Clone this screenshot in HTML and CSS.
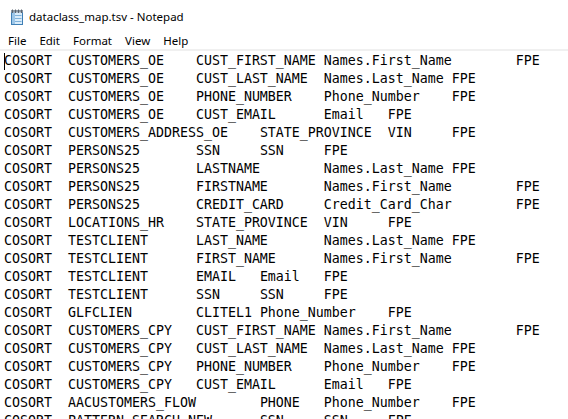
FILE: index.html
```html
<!DOCTYPE html>
<html>
<head>
<meta charset="utf-8">
<title>dataclass_map.tsv - Notepad</title>
<link rel="stylesheet" href="styles.css">
</head>
<body>
<div class="window">
  <div class="titlebar">
    <svg class="app-icon" width="16" height="16" viewBox="0 0 16 16">
      <rect x="2.5" y="2.5" width="11" height="13" fill="#d9ecfa" stroke="#3f7fb5"/>
      <rect x="3" y="3" width="3" height="12" fill="#9cc6e8"/>
      <line x1="6" y1="6.5" x2="12.5" y2="6.5" stroke="#7fb1da"/>
      <line x1="6" y1="9.5" x2="12.5" y2="9.5" stroke="#7fb1da"/>
      <line x1="6" y1="12.5" x2="12.5" y2="12.5" stroke="#7fb1da"/>
      <rect x="2" y="1" width="12" height="2.5" fill="#8d9aa6"/>
      <line x1="3.5" y1="0.5" x2="3.5" y2="4" stroke="#5a6470"/>
      <line x1="6.5" y1="0.5" x2="6.5" y2="4" stroke="#5a6470"/>
      <line x1="9.5" y1="0.5" x2="9.5" y2="4" stroke="#5a6470"/>
      <line x1="12.5" y1="0.5" x2="12.5" y2="4" stroke="#5a6470"/>
    </svg>
    <span class="title">dataclass_map.tsv - Notepad</span>
  </div>
  <div class="menubar">
    <span class="menu-item">File</span>
    <span class="menu-item">Edit</span>
    <span class="menu-item">Format</span>
    <span class="menu-item">View</span>
    <span class="menu-item">Help</span>
  </div>
  <div class="editor"><span class="caret"></span><pre class="content">COSORT	CUSTOMERS_OE	CUST_FIRST_NAME	Names.First_Name	FPE
COSORT	CUSTOMERS_OE	CUST_LAST_NAME	Names.Last_Name	FPE
COSORT	CUSTOMERS_OE	PHONE_NUMBER	Phone_Number	FPE
COSORT	CUSTOMERS_OE	CUST_EMAIL	Email	FPE
COSORT	CUSTOMERS_ADDRESS_OE	STATE_PROVINCE	VIN	FPE
COSORT	PERSONS25	SSN	SSN	FPE
COSORT	PERSONS25	LASTNAME	Names.Last_Name	FPE
COSORT	PERSONS25	FIRSTNAME	Names.First_Name	FPE
COSORT	PERSONS25	CREDIT_CARD	Credit_Card_Char	FPE
COSORT	LOCATIONS_HR	STATE_PROVINCE	VIN	FPE
COSORT	TESTCLIENT	LAST_NAME	Names.Last_Name	FPE
COSORT	TESTCLIENT	FIRST_NAME	Names.First_Name	FPE
COSORT	TESTCLIENT	EMAIL	Email	FPE
COSORT	TESTCLIENT	SSN	SSN	FPE
COSORT	GLFCLIEN	CLITEL1	Phone_Number	FPE
COSORT	CUSTOMERS_CPY	CUST_FIRST_NAME	Names.First_Name	FPE
COSORT	CUSTOMERS_CPY	CUST_LAST_NAME	Names.Last_Name	FPE
COSORT	CUSTOMERS_CPY	PHONE_NUMBER	Phone_Number	FPE
COSORT	CUSTOMERS_CPY	CUST_EMAIL	Email	FPE
COSORT	AACUSTOMERS_FLOW	PHONE	Phone_Number	FPE
COSORT	PATTERN_SEARCH_NEW	SSN	SSN	FPE</pre></div>
</div>
</body>
</html>
```

FILE: styles.css
```css
html, body {
  margin: 0;
  padding: 0;
  background: #ffffff;
  overflow: hidden;
}

.window {
  width: 568px;
  height: 419px;
  display: flex;
  flex-direction: column;
  background: #ffffff;
  overflow: hidden;
}

.titlebar {
  flex: none;
  height: 31px;
  display: flex;
  align-items: center;
  padding-left: 9px;
  gap: 4px;
  box-sizing: border-box;
  padding-top: 2px;
}

.app-icon {
  flex: none;
}

.title {
  font-family: "Noto Sans", "Open Sans", sans-serif;
  font-size: 11.5px;
  color: #000000;
}

.menubar {
  flex: none;
  height: 18px;
  display: flex;
  align-items: center;
  padding-left: 1.5px;
  font-family: "Noto Sans", "Open Sans", sans-serif;
  font-size: 11.5px;
  color: #000000;
  border-bottom: 2px solid #f0f0f0;
}

.menu-item {
  padding: 0 6.5px;
}

.editor {
  position: relative;
  flex: 1;
  min-height: 0;
  padding: 1px 0 0 4px;
}

.content {
  margin: 0;
  font-family: "DejaVu Sans Mono", "Liberation Mono", monospace;
  font-size: 13.29px;
  line-height: 18px;
  tab-size: 8;
  -moz-tab-size: 8;
  white-space: pre;
  color: #000000;
}

.caret {
  position: absolute;
  left: 4px;
  top: 2px;
  width: 1px;
  height: 17px;
  background: #000000;
}
```
